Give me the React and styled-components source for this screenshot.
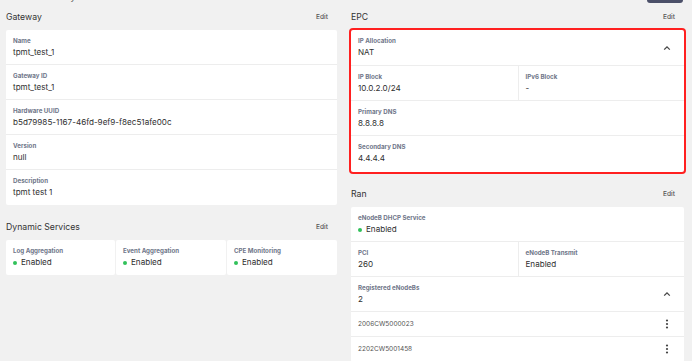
import React from 'react';
import styled, { createGlobalStyle } from 'styled-components';

const GlobalStyle = createGlobalStyle`
  html, body {
    margin: 0;
    padding: 0;
    background: #f1f1f1;
  }
  body {
    font-family: Inter, "Noto Sans", sans-serif;
    color: #333;
    overflow: hidden;
  }
  * { box-sizing: border-box; }
`;

const gateway = [
  { label: 'Name', value: 'tpmt_test_1' },
  { label: 'Gateway ID', value: 'tpmt_test_1' },
  { label: 'Hardware UUID', value: 'b5d79985-1167-46fd-9ef9-f8ec51afe00c' },
  { label: 'Version', value: 'null' },
  { label: 'Description', value: 'tpmt test 1' },
];

const services = ['Log Aggregation', 'Event Aggregation', 'CPE Monitoring'];

const enodebs = ['2006CW5000023', '2202CW5001458'];

const ChevronUp = () => (
  <svg width="8" height="6" viewBox="0 0 8 6">
    <path d="M1.2 4.6 L4 1.8 L6.8 4.6" fill="none" stroke="#444" strokeWidth="1.3" />
  </svg>
);

const Kebab = () => (
  <svg width="4" height="10" viewBox="0 0 4 10">
    <circle cx="2" cy="1.5" r="1.1" fill="#444" />
    <circle cx="2" cy="5" r="1.1" fill="#444" />
    <circle cx="2" cy="8.5" r="1.1" fill="#444" />
  </svg>
);

const Field = ({ label, value, status }) => (
  <FieldBox>
    <Label>{label}</Label>
    <Value>
      {status && <Dot />}
      {value}
    </Value>
  </FieldBox>
);

const App = () => {
  return (
    <>
      <GlobalStyle />
      <Page>
        {/* page is scrolled: only the bottom edge of the top bar shows */}
        <TopBar>
          <Crumb>
            <span>←</span>
            <span>Gateway</span>
          </Crumb>
          <TopButton />
        </TopBar>

        <Columns>
          <Column>
            <Section>
              <SectionHeader>
                <Heading>Gateway</Heading>
                <EditLink>Edit</EditLink>
              </SectionHeader>
              <Card>
                {gateway.map(f => (
                  <Row key={f.label}>
                    <Field label={f.label} value={f.value} />
                  </Row>
                ))}
              </Card>
            </Section>

            <Section>
              <SectionHeader>
                <Heading>Dynamic Services</Heading>
                <EditLink>Edit</EditLink>
              </SectionHeader>
              <ServiceGrid>
                {services.map(s => (
                  <ServiceCell key={s}>
                    <Field label={s} value="Enabled" status />
                  </ServiceCell>
                ))}
              </ServiceGrid>
            </Section>
          </Column>

          <Column>
            <Section>
              <SectionHeader>
                <Heading>EPC</Heading>
                <EditLink>Edit</EditLink>
              </SectionHeader>
              <Card highlight>
                <Row height={36}>
                  <Field label="IP Allocation" value="NAT" />
                  <IconSlot><ChevronUp /></IconSlot>
                </Row>
                <Row split>
                  <Field label="IP Block" value="10.0.2.0/24" />
                  <Field label="IPv6 Block" value="-" />
                </Row>
                <Row>
                  <Field label="Primary DNS" value="8.8.8.8" />
                </Row>
                <Row height={36}>
                  <Field label="Secondary DNS" value="4.4.4.4" />
                </Row>
              </Card>
            </Section>

            <Section>
              <SectionHeader>
                <Heading>Ran</Heading>
                <EditLink>Edit</EditLink>
              </SectionHeader>
              <Card>
                <Row>
                  <Field label="eNodeB DHCP Service" value="Enabled" status />
                </Row>
                <Row split>
                  <Field label="PCI" value="260" />
                  <Field label="eNodeB Transmit" value="Enabled" />
                </Row>
                <Row>
                  <Field label="Registered eNodeBs" value="2" />
                  <IconSlot><ChevronUp /></IconSlot>
                </Row>
                {enodebs.map(id => (
                  <ListRow key={id}>
                    <ListText>{id}</ListText>
                    <IconSlot><Kebab /></IconSlot>
                  </ListRow>
                ))}
              </Card>
            </Section>
          </Column>
        </Columns>
      </Page>
    </>
  );
};

export default App;

const Page = styled.div`
  width: 692px;
  height: 361px;
  overflow: hidden;
`;

const TopBar = styled.div`
  display: flex;
  align-items: flex-end;
  justify-content: space-between;
  height: 20px;
  margin-top: -16px;
  padding: 0 9px 0 8px;
`;

const Crumb = styled.div`
  display: flex;
  gap: 22px;
  font-size: 9px;
  color: #555;
  line-height: 10px;
  margin-bottom: 2px;
`;

const TopButton = styled.div`
  width: 36px;
  height: 19px;
  border-radius: 3px;
  background: #4b5069;
  margin-bottom: 1px;
`;

const Columns = styled.div`
  display: grid;
  grid-template-columns: 331px 333px;
  column-gap: 14px;
  padding: 0 8px 0 6px;
`;

const Column = styled.div`
  display: flex;
  flex-direction: column;
  gap: 9px;
`;

const Section = styled.div`
  display: flex;
  flex-direction: column;
`;

const SectionHeader = styled.div`
  display: flex;
  align-items: center;
  justify-content: space-between;
  height: 26px;
  padding-right: 9px;
`;

const Heading = styled.div`
  font-size: 8.7px;
  color: #333;
`;

const EditLink = styled.div`
  font-size: 6.6px;
  font-weight: 500;
  color: #555;
`;

const Card = styled.div`
  background: #fff;
  border-radius: 2px;
  display: flex;
  flex-direction: column;
  box-shadow: ${p => (p.highlight ? '0 0 0 2px #ff2020' : 'none')};
`;

const Row = styled.div`
  display: ${p => (p.split ? 'grid' : 'flex')};
  grid-template-columns: 1fr 1fr;
  align-items: stretch;
  justify-content: space-between;
  height: ${p => p.height || 35}px;
  border-bottom: 1px solid #ededed;
  &:last-child { border-bottom: none; }
  & > div + div {
    border-left: ${p => (p.split ? '1px solid #ededed' : 'none')};
  }
`;

const FieldBox = styled.div`
  display: flex;
  flex-direction: column;
  padding: 7px 7px 0;
  gap: 2px;
`;

const Label = styled.div`
  font-size: 6.2px;
  font-weight: 700;
  color: #6f7689;
  line-height: 8px;
`;

const Value = styled.div`
  display: flex;
  align-items: center;
  gap: 4px;
  font-size: 8.1px;
  color: #2f2f2f;
  line-height: 11px;
`;

const Dot = styled.span`
  width: 4px;
  height: 4px;
  border-radius: 50%;
  background: #31c15a;
`;

const IconSlot = styled.div`
  display: flex;
  align-items: center;
  justify-content: center;
  width: 30px;
  margin-right: 2px;
`;

const ServiceGrid = styled.div`
  display: grid;
  grid-template-columns: 109px 110px 110px;
  column-gap: 1px;
  height: 35px;
`;

const ServiceCell = styled.div`
  background: #fff;
  border-radius: 2px;
`;

const ListRow = styled.div`
  display: flex;
  align-items: center;
  justify-content: space-between;
  height: 25px;
  padding-left: 7px;
  border-bottom: 1px solid #ededed;
`;

const ListText = styled.div`
  font-size: 6.5px;
  color: #555;
`;
